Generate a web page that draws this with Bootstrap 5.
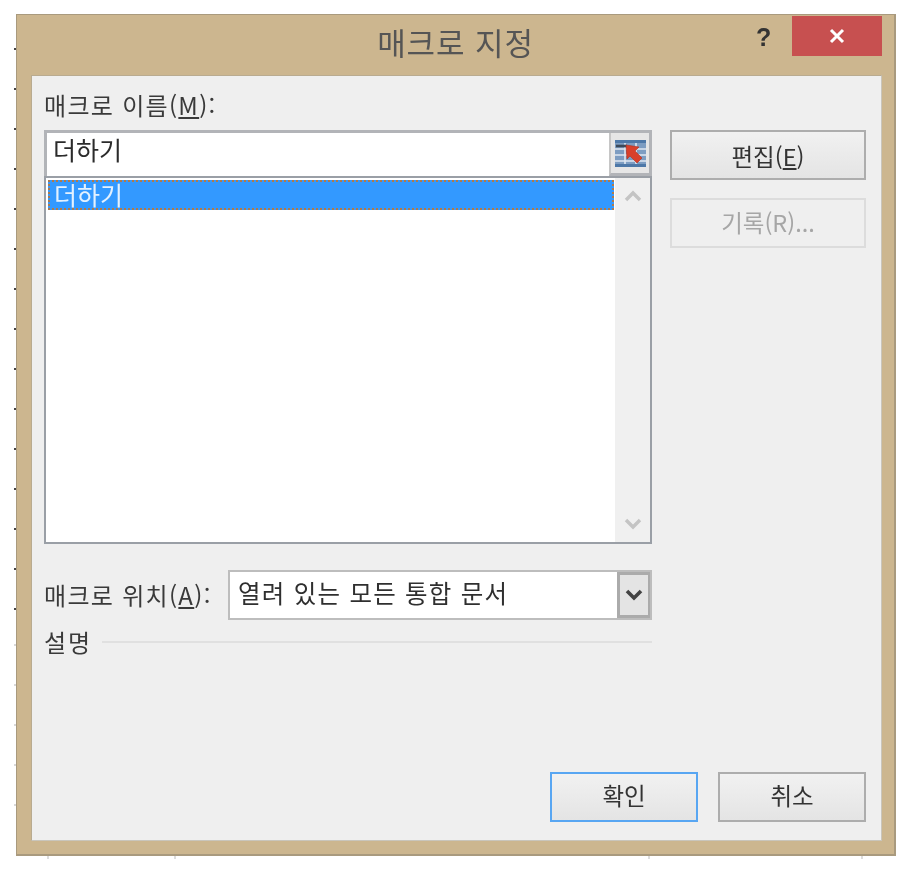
<!DOCTYPE html>
<html lang="ko">
<head>
<meta charset="utf-8">
<title>매크로 지정</title>
<link href="https://cdn.jsdelivr.net/npm/bootstrap@5.3.0/dist/css/bootstrap.min.css" rel="stylesheet">
<style>
html,body{background:#fff;height:100%;overflow:hidden}
body{font-family:"Noto Sans CJK KR","Noto Sans",sans-serif;color:#333;font-size:24px;line-height:1.2;position:relative}
.tick-left{position:absolute;left:14px;top:48px;width:2px;height:563px;background:repeating-linear-gradient(to bottom,#444 0,#444 2px,transparent 2px,transparent 40px)}
.tick-left2{position:absolute;left:14px;top:644px;width:2px;height:190px;background:repeating-linear-gradient(to bottom,#d8d8d8 0,#d8d8d8 2px,transparent 2px,transparent 40px)}
.tick-bot{position:absolute;top:855px;width:2px;height:4px;background:#ddd}
.dlg{position:relative;margin:14px 0 0 16px;width:880px;height:842px;background:#ccb68f;border:1px solid #a99a7e;border-bottom-width:2px;border-right-width:2px;filter:blur(.45px)}
.bar{height:60px;position:relative}
.bar-title{font-size:31px;color:#555;letter-spacing:.9px;line-height:54px;text-align:center;width:877px}
.help{position:absolute;left:739px;top:4px;font:700 25px/36px "Liberation Sans",sans-serif;color:#333}
.closer{position:absolute;left:775px;top:1px;width:90px;height:40px;background:#c75050;display:flex;align-items:center;justify-content:center}
.panel{margin-left:14px;width:851px;height:766px;background:#efefef;border:1px solid #b9ab90;border-bottom-color:#c9c5bb;border-right-color:#c9c5bb;padding:0 15px 18px 12px}
.leftc{width:608px}
.rightc{width:196px;padding-top:54px}
.lbl{height:54px;padding-top:15px;font-size:24px;letter-spacing:1.3px;color:#3a3a3a}
.namebox{height:46px;background:#fff;border:3px solid #b2b4b8;border-bottom:0;padding-left:6px;font-size:25px;line-height:33px;color:#2b2b2b}
.picker{width:40px;height:43px;background:#e6e6e6;border-left:2px solid #c6c6c6;border-bottom:3px solid #b2b4b8}
.lst{height:368px;background:#fff;border:2px solid #9a9fa6;padding:2px 0 0 2px}
.itm{height:30px;width:566px;background:#3399ff;color:#e3f1ff;border:2px dotted #b07a4a;padding-left:4px;font-size:25px;line-height:25px}
.sb{width:35px;background:#f0f0f0;margin-top:-2px;padding:12px 0}
.loc{margin-top:26px;height:50px}
.loc-l{width:184px;font-size:24px;letter-spacing:1.3px;color:#3a3a3a;flex:none}
.combo{height:50px;background:#fff;border:2px solid #bdbdbd;padding-left:8px;font-size:24.5px;letter-spacing:1.25px;line-height:42px;color:#2f2f2f}
.drop{width:33px;height:46px;background:#e4e4e4;border:3px solid #ababab;border-right-width:2px}
.desc{height:44px;font-size:24px;letter-spacing:2px;color:#3a3a3a}
.rule{height:2px;background:#e0e0e0;margin-left:10px}
.wb{display:flex;align-items:center;justify-content:center;background:linear-gradient(#f1f1f1,#e4e4e4);border:2px solid #adadad;border-radius:0;color:#333;font-size:23.5px;padding:0 0 2px}
.wb-e{width:196px;height:50px;padding:3px 0 0}
.btn.wb-off:disabled{width:196px;height:50px;margin-top:18px;background:#efefef;border-color:#dcdcdc;color:#a6a6a6;opacity:1;padding:0}
.wb-f{width:148px;height:50px}
.wb-ok{border-color:#58a6f2}
.foot{gap:20px}
</style>
</head>
<body>
<div class="tick-left"></div>
<div class="tick-left2"></div>
<div class="tick-bot" style="left:47px"></div>
<div class="tick-bot" style="left:174px"></div>
<div class="tick-bot" style="left:648px"></div>
<div class="tick-bot" style="left:861px"></div>
<div class="dlg">
  <div class="bar">
    <div class="bar-title">매크로 지정</div>
    <span class="help">?</span>
    <div class="closer">
      <svg width="16" height="16" viewBox="0 0 16 16"><path d="M2 2 14 14M14 2 2 14" stroke="#fff" stroke-width="3"/></svg>
    </div>
  </div>
  <div class="panel d-flex flex-column">
    <div class="d-flex gap-3 justify-content-between flex-grow-1">
      <div class="leftc">
        <div class="lbl">매크로 이름(<u>M</u>):</div>
        <div class="namebox d-flex justify-content-between">
          <span>더하기</span>
          <span class="picker d-flex align-items-center justify-content-center">
            <svg width="31" height="27" viewBox="0 0 31 27">
              <rect width="31" height="27" fill="#7d9dc2"/>
              <path d="M0 9H31M0 15H31M0 21H31" stroke="#dfe8f2" stroke-width="1.6"/>
              <path d="M10 0V27M21 0V27" stroke="#dfe8f2" stroke-width="1.6"/>
              <path d="M0 1.5H31M0 25.5H31" stroke="#4d78a8" stroke-width="3"/>
              <path d="M1 6H12" stroke="#3c4a5a" stroke-width="2.6"/>
              <path d="M11 5 24 7 20 11 27 18 22 23 15 16 12 19Z" fill="#d8402c" stroke="#b0301f" stroke-width=".6"/>
            </svg>
          </span>
        </div>
        <div class="lst d-flex justify-content-between">
          <div class="itm">더하기</div>
          <div class="sb d-flex flex-column justify-content-between align-items-center">
            <svg width="18" height="12" viewBox="0 0 18 12"><path d="M2 10 9 3 16 10" fill="none" stroke="#c4c4c4" stroke-width="3.4"/></svg>
            <svg width="18" height="12" viewBox="0 0 18 12"><path d="M2 2 9 9 16 2" fill="none" stroke="#c4c4c4" stroke-width="3.4"/></svg>
          </div>
        </div>
        <div class="loc d-flex align-items-center">
          <div class="loc-l">매크로 위치(<u>A</u>):</div>
          <div class="combo flex-grow-1 d-flex justify-content-between">
            <span>열려 있는 모든 통합 문서</span>
            <span class="drop d-flex align-items-center justify-content-center">
              <svg width="18" height="12" viewBox="0 0 18 12"><path d="M2 2 9 9 16 2" fill="none" stroke="#444" stroke-width="3.6"/></svg>
            </span>
          </div>
        </div>
        <div class="desc d-flex align-items-center">
          <span>설명</span>
          <div class="rule flex-grow-1"></div>
        </div>
      </div>
      <div class="rightc">
        <button type="button" class="btn wb wb-e">편집(<u>E</u>)</button>
        <button type="button" class="btn wb wb-off" disabled>기록(R)...</button>
      </div>
    </div>
    <div class="d-flex justify-content-end foot">
      <button type="button" class="btn wb wb-f wb-ok">확인</button>
      <button type="button" class="btn wb wb-f">취소</button>
    </div>
  </div>
</div>
</body>
</html>
